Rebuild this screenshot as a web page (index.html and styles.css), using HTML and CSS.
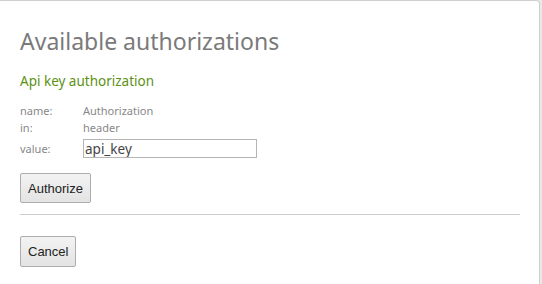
FILE: index.html
```html
<!DOCTYPE html>
<html>
<head>
<meta charset="utf-8">
<link rel="stylesheet" href="styles.css">
</head>
<body>
<div class="dialog">
  <h1 class="title">Available authorizations</h1>
  <h3 class="subtitle">Api key authorization</h3>
  <div class="fields">
    <div class="row"><span class="key">name:</span><span class="val">Authorization</span></div>
    <div class="row"><span class="key">in:</span><span class="val">header</span></div>
    <div class="row row-input"><span class="key">value:</span><input class="input" type="text" value="api_key"></div>
  </div>
  <div class="actions"><button class="btn">Authorize</button></div>
  <div class="divider"></div>
  <div class="footer"><button class="btn">Cancel</button></div>
</div>
</body>
</html>
```
FILE: styles.css
```css
html, body {
  margin: 0;
  padding: 0;
  background: #e9e9e9;
  height: 100%;
  overflow: hidden;
}
.dialog {
  box-sizing: border-box;
  width: 540px;
  height: 100%;
  background: #fff;
  border-top: 1px solid #cfcfcf;
  border-right: 1px solid #cfcfcf;
  border-top-right-radius: 4px;
  padding: 0 19px 0 20px;
  font-family: "Noto Sans", "Open Sans", sans-serif;
}
.title {
  margin: 25px 0 0 0;
  font-size: 23px;
  line-height: 31px;
  font-weight: 400;
  color: #7a7a7a;
}
.subtitle {
  margin: 14px 0 0 0;
  font-size: 13.5px;
  line-height: 20px;
  font-weight: 400;
  color: #5d9116;
}
.fields {
  margin-top: 11px;
  display: flex;
  flex-direction: column;
}
.row {
  display: flex;
  align-items: center;
  font-size: 11px;
  line-height: 17px;
  color: #888;
}
.row-input {
  margin-top: 3px;
}
.key {
  width: 63px;
  flex: none;
}
.val {
  color: #888;
}
.input {
  box-sizing: border-box;
  width: 174px;
  height: 19px;
  margin: 0;
  padding: 0 1px;
  border: 1px solid #b5b5b5;
  font-family: "Noto Sans", "Open Sans", sans-serif;
  font-size: 13.5px;
  color: #444;
  outline: none;
}
.actions {
  margin-top: 15px;
}
.btn {
  box-sizing: border-box;
  height: 30px;
  margin: 0;
  padding: 0 7px;
  font-family: "Liberation Sans", Arial, sans-serif;
  font-size: 13px;
  color: #222;
  border: 1px solid #adadad;
  border-radius: 2px;
  background: linear-gradient(#f3f3f3, #e3e3e3);
}
.divider {
  margin-top: 11px;
  height: 1px;
  background: #cccccc;
}
.footer {
  margin-top: 21px;
}
.footer .btn {
  height: 31px;
}
```
